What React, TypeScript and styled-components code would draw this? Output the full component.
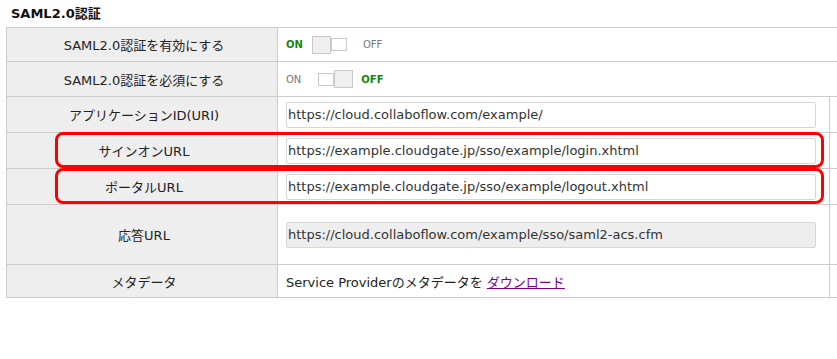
import * as React from 'react'
import styled, {createGlobalStyle} from 'styled-components'

const GlobalStyle = createGlobalStyle`
  html, body {
    margin: 0;
    padding: 0;
    background: #fff;
    overflow: hidden;
  }
  body {
    font-family: "DejaVu Sans", "Noto Sans CJK JP", sans-serif;
    font-size: 13px;
    color: #333;
  }
`

const Page = styled.div`
  padding: 6px 0 0 6px;
`

const Title = styled.h3`
  margin: 0 0 5px 5px;
  font-size: 13px;
  font-weight: bold;
  color: #111;
  line-height: 16px;
`

const Frame = styled.div`
  position: relative;
`

const Table = styled.table`
  border-collapse: collapse;
  table-layout: fixed;
  width: 831px;
`

const Col = styled.col<{$w: number}>`
  width: ${p => p.$w}px;
`

const Row = styled.tr<{$h: number}>`
  height: ${p => p.$h}px;
`

const Label = styled.th`
  background: #eee;
  border: 1px solid #ccc;
  font-weight: normal;
  color: #222;
  text-align: center;
  padding: 0 0 0 4px;
`

const Value = styled.td`
  border: 1px solid #ccc;
  border-right: none;
  padding: 0 8px;
  color: #222;
  white-space: nowrap;
`

const Extra = styled.td`
  border: 1px solid #ccc;
  border-right: none;
`

const Field = styled.input<{$readonly?: boolean}>`
  box-sizing: border-box;
  width: 530px;
  height: 26px;
  padding: 0 1px;
  border: 1px solid #d6d6d6;
  border-radius: 2px;
  font: inherit;
  font-size: 13px;
  color: #333;
  background: ${p => (p.$readonly ? '#eee' : '#fff')};
  outline: none;
  display: block;
`

const SwitchLine = styled.div`
  display: flex;
  align-items: center;
`

const State = styled.span<{$active: boolean}>`
  font-size: 10px;
  font-weight: ${p => (p.$active ? 'bold' : 'normal')};
  color: ${p => (p.$active ? '#118811' : '#777')};
`

const Switch = styled.div<{$on: boolean}>`
  display: flex;
  align-items: center;
  justify-content: ${p => (p.$on ? 'flex-start' : 'flex-end')};
  width: 43px;
  margin: 0 8px 0 9px;
`

const Knob = styled.span`
  box-sizing: border-box;
  width: 19px;
  height: 18px;
  background: #efefef;
  border: 1px solid #c9c9c9;
`

const Track = styled.span`
  box-sizing: border-box;
  width: 16px;
  height: 13px;
  background: #fff;
  border: 1px solid #c9c9c9;
`

const Link = styled.a`
  color: #800080;
  text-decoration: underline;
`

const Highlight = styled.div<{$top: number}>`
  position: absolute;
  top: ${p => p.$top}px;
  left: 49px;
  width: 769px;
  height: 36px;
  box-sizing: border-box;
  border: 3px solid #ff0000;
  border-radius: 8px;
  pointer-events: none;
`

const Toggle = ({on}: {on: boolean}) => (
  <SwitchLine>
    <State $active={on}>ON</State>
    <Switch $on={on}>
      {on ? (
        <>
          <Knob />
          <Track />
        </>
      ) : (
        <>
          <Track />
          <Knob />
        </>
      )}
    </Switch>
    <State $active={!on}>OFF</State>
  </SwitchLine>
)

const App = () => {
  return (
    <Page>
      <GlobalStyle />
      <Title>SAML2.0認証</Title>
      <Frame>
        <Table>
          <colgroup>
            <Col $w={271} />
            <Col $w={552} />
            <Col $w={8} />
          </colgroup>
          <tbody>
            <Row $h={34}>
              <Label>SAML2.0認証を有効にする</Label>
              <Value colSpan={2}>
                <Toggle on />
              </Value>
            </Row>
            <Row $h={35}>
              <Label>SAML2.0認証を必須にする</Label>
              <Value colSpan={2}>
                <Toggle on={false} />
              </Value>
            </Row>
            <Row $h={36}>
              <Label>アプリケーションID(URI)</Label>
              <Value>
                <Field defaultValue="https://cloud.collaboflow.com/example/" />
              </Value>
              <Extra />
            </Row>
            <Row $h={36}>
              <Label>サインオンURL</Label>
              <Value>
                <Field defaultValue="https://example.cloudgate.jp/sso/example/login.xhtml" />
              </Value>
              <Extra />
            </Row>
            <Row $h={36}>
              <Label>ポータルURL</Label>
              <Value>
                <Field defaultValue="https://example.cloudgate.jp/sso/example/logout.xhtml" />
              </Value>
              <Extra />
            </Row>
            <Row $h={60}>
              <Label>応答URL</Label>
              <Value>
                <Field $readonly readOnly defaultValue="https://cloud.collaboflow.com/example/sso/saml2-acs.cfm" />
              </Value>
              <Extra />
            </Row>
            <Row $h={33}>
              <Label>メタデータ</Label>
              <Value>
                Service Providerのメタデータを <Link href="#">ダウンロード</Link>
              </Value>
              <Extra />
            </Row>
          </tbody>
        </Table>
        <Highlight $top={105} />
        <Highlight $top={141} />
      </Frame>
    </Page>
  )
}

export default App
